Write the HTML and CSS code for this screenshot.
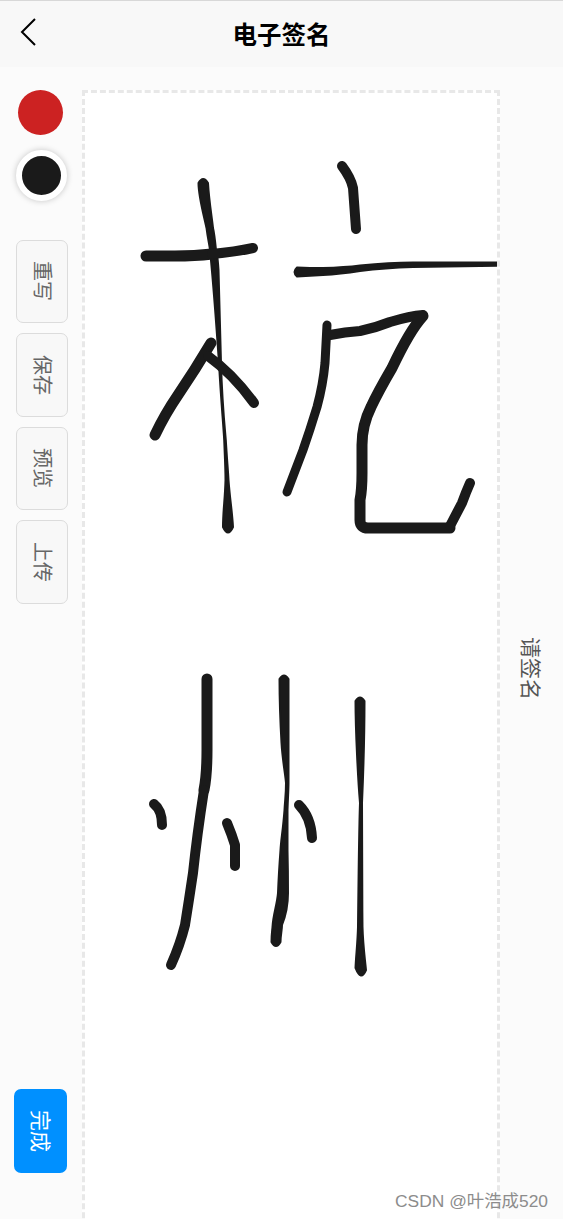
FILE: index.html
```html
<!DOCTYPE html>
<html lang="zh-CN">
<head>
<meta charset="utf-8">
<title>电子签名</title>
<link rel="stylesheet" href="styles.css">
</head>
<body>
<div class="page">
  <header class="topbar">
    <span class="back">
      <svg width="18" height="30" viewBox="0 0 18 30"><path d="M16 2 L3 15 L16 28" class="chevron"/></svg>
    </span>
    <h1 class="title">电子签名</h1>
    <span></span>
  </header>
  <main class="main">
    <aside class="tools">
      <div class="swatches">
        <span class="swatch swatch-red"></span>
        <span class="swatch swatch-black"></span>
      </div>
      <div class="actions">
        <button class="action">重写</button>
        <button class="action">保存</button>
        <button class="action">预览</button>
        <button class="action">上传</button>
      </div>
      <button class="done">完成</button>
    </aside>
    <section class="canvas">
      <svg class="ink-layer" viewBox="85 93 412 1126" width="412" height="1126">
        <path class="ink" d="M198.5,183 C198.5,196 203,212 206.5,228 C208,240 209.5,245 210,250 C213,280 216,320 219,363 C221,400 223,420 224.2,440 C225,460 225.5,470 225.5,480 C225,500 223,510 223,527 Q228,538 233,527 C232,510 230,500 228.5,480 C228,470 227,460 225.8,440 C224,420 222,400 221,363 C220,320 219,290 218.5,270 C217.5,255 216.5,250 216,250 C215,240 214,232 213,228 C211.5,215 209,200 208,183 Q203,175 198.5,183 Z"/>
        <path class="s11" d="M146,256 L175,256 Q195,256 212,254"/>
        <path class="s10" d="M212,254 Q235,252 253,248"/>
        <path class="s11" d="M211,343 Q195,370 178,395 Q165,414 155,435"/>
        <path class="s10" d="M208,356 Q233,374 254,403"/>
        <path class="s10" d="M342,166 Q351,178 353,188 L356,229"/>
        <path class="ink" d="M297,267.5 Q310,268 323,268 Q345,267.5 360,265.5 Q390,262.5 413,262.5 L497,262.5 L497,265.8 L413,267 Q385,268 360,271 Q340,274 323,275 L297,276.5 Q292,272 297,267.5 Z"/>
        <path class="s9" d="M327,325 L325,363 Q323,385 317,407 Q310,430 303,450 L287,492"/>
        <path class="s10" d="M330,335 Q345,332 360,331 Q375,328 390,322 Q410,316 423,315"/>
        <path class="s11" d="M423,316 Q410,330 392,368 Q378,392 371,407 Q362,425 362,445 L362,473 Q362,490 360,500 L360,520 Q360,528 368,528 L450,528"/>
        <path class="s10" d="M450,526 L462,503 Q466,492 470,483"/>
        <path class="s11" d="M207,679 L207,750 Q207,775 204,790"/>
        <path class="s10" d="M204,790 Q197,835 193,873 Q189,900 185,925 Q180,945 171,965"/>
        <path class="s10" d="M154,804 Q162,810 162,825"/>
        <path class="s10" d="M227,823 Q232,835 235,845 L235,866"/>
        <path class="ink" d="M279.5,679 C279.5,700 280.5,725 281.5,743 C282.5,760 285,772 286,783 C286,795 285,800 284.5,810 C283,830 281,840 280.5,850 C279,870 278.5,880 278,893 C277,905 273,915 272.5,927 C272,932 271.5,935 271.5,942 Q276,950 280.5,942 C280.5,935 282,930 282,925 C286,915 288,905 288,893 C288,880 288,870 287.5,850 C287.5,830 287.5,820 287.5,810 C288,795 288.5,790 288.5,783 C288.5,770 288.5,755 288.5,743 L288.5,679 Q284,672 279.5,679 Z"/>
        <path class="s10" d="M299,805 Q311,817 312,838"/>
        <path class="ink" d="M355.5,701 C355.5,730 358,780 360,803 C359,830 358.5,880 358,927 C357.5,945 356,955 355.5,968 Q361,982 366,970 C364.5,955 363,945 362.5,927 C362,880 362,830 362,803 C363,780 364.5,730 364.5,701 Q360,694 355.5,701 Z"/>
      </svg>
    </section>
    <aside class="hint">
      <span class="hint-text">请签名</span>
    </aside>
  </main>
  <div class="watermark">CSDN @叶浩成520</div>
</div>
</body>
</html>
```
FILE: styles.css
```css
* {
  box-sizing: border-box;
}

html,
body {
  margin: 0;
  padding: 0;
  background: #fbfbfb;
}

body {
  font-family: "Noto Sans CJK SC", "Liberation Sans", sans-serif;
}

.page {
  position: relative;
  width: 563px;
  height: 1219px;
  overflow: hidden;
  display: flex;
  flex-direction: column;
}

.topbar {
  flex: none;
  height: 67px;
  border-top: 1px solid #d8d8d8;
  background: #f8f8f8;
  display: grid;
  grid-template-columns: 1fr auto 1fr;
  align-items: center;
}

.back {
  display: flex;
  padding-left: 19px;
  padding-bottom: 4px;
}

.chevron {
  fill: none;
  stroke: #000;
  stroke-width: 2;
}

.title {
  margin: 0;
  font-size: 24.5px;
  font-weight: 700;
  line-height: 32px;
  color: #000;
}

.main {
  flex: none;
  height: 1152px;
  display: grid;
  grid-template-columns: 82px 418px 63px;
  grid-template-rows: 1152px;
}

.tools {
  display: flex;
  flex-direction: column;
  padding-top: 23px;
  padding-bottom: 46px;
}

.swatches {
  display: flex;
  flex-direction: column;
  align-items: flex-start;
  gap: 15px;
}

.swatch {
  display: block;
  border-radius: 50%;
}

.swatch-red {
  width: 45px;
  height: 45px;
  margin-left: 18px;
  background: #cc2222;
}

.swatch-black {
  width: 51px;
  height: 51px;
  margin-left: 16px;
  background: #1a1a1a;
  border: 6px solid #fff;
  box-shadow: 0 0 6px rgba(0, 0, 0, 0.22);
}

.actions {
  display: flex;
  flex-direction: column;
  gap: 10px;
  margin-top: 38.5px;
  margin-left: 16px;
}

.action {
  width: 52px;
  height: 83.5px;
  padding: 0 0 0 1px;
  border: 1px solid #dcdcdc;
  border-radius: 7px;
  background: #f8f8f8;
  color: #666;
  font-family: inherit;
  font-size: 20px;
  line-height: 1;
  writing-mode: vertical-rl;
  text-orientation: sideways;
  display: flex;
  align-items: center;
  justify-content: center;
}

.done {
  width: 53px;
  height: 84px;
  margin-top: auto;
  margin-left: 14px;
  padding: 0 0 0 2px;
  border: 0;
  border-radius: 7px;
  background: #0090ff;
  color: #fff;
  font-family: inherit;
  font-size: 21px;
  line-height: 1;
  writing-mode: vertical-rl;
  text-orientation: sideways;
  display: flex;
  align-items: center;
  justify-content: center;
}

.canvas {
  position: relative;
  margin-top: 23px;
  height: 1200px;
  background: #fff;
  border: 3px dashed #e8e8e8;
}

.ink-layer {
  position: absolute;
  left: 0;
  top: 0;
  display: block;
}

.ink {
  fill: #1a1a1a;
  stroke: #1a1a1a;
  stroke-width: 2;
  stroke-linejoin: round;
}

.s9,
.s10,
.s11 {
  fill: none;
  stroke: #1a1a1a;
  stroke-linecap: round;
  stroke-linejoin: round;
}

.s9 { stroke-width: 9; }
.s10 { stroke-width: 10; }
.s11 { stroke-width: 11; }

.hint {
  display: flex;
  align-items: center;
  justify-content: center;
  padding-top: 50px;
}

.hint-text {
  font-size: 21px;
  line-height: 1;
  color: #555;
  writing-mode: vertical-rl;
  text-orientation: sideways;
}

.watermark {
  position: absolute;
  right: 15px;
  bottom: 6px;
  font-family: "Liberation Sans", "Noto Sans CJK SC", sans-serif;
  font-size: 17.4px;
  line-height: 24px;
  color: #8c8c8c;
}
```
